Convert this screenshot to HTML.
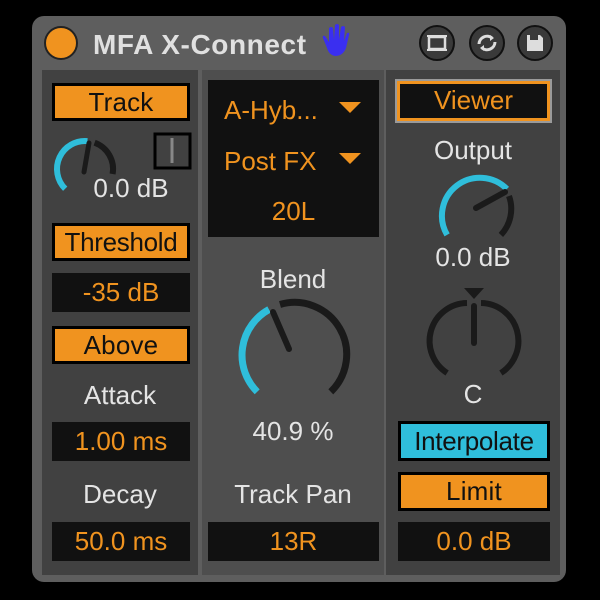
<!DOCTYPE html>
<html><head><meta charset="utf-8"><style>
*{margin:0;padding:0;box-sizing:border-box}
body{width:600px;height:600px;background:#000;position:relative;overflow:hidden;font-family:"Liberation Sans",sans-serif}
.dev{position:absolute;left:32px;top:16px;width:534px;height:566px;background:#5e5e5e;border-radius:12px}
.col{position:absolute;top:70px;height:505px}
.t{position:absolute;text-align:center;font-size:26px;line-height:1}
.btn{position:absolute;border:3px solid #000;background:#f0931f;color:#111;text-align:center;font-size:26px;letter-spacing:0.2px}
.box{position:absolute;background:#111;color:#f0931f;text-align:center;font-size:26px}
.lab{position:absolute;color:#e4e4e4;text-align:center;font-size:26px}
</style></head><body>
<div class="dev"></div>
<div class="col" style="left:42px;width:156px;background:#414141"></div>
<div class="col" style="left:202px;width:182px;background:#4e4e4e"></div>
<div class="col" style="left:386px;width:174px;background:#414141"></div>
<svg width="600" height="600" style="position:absolute;left:0;top:0">
<circle cx="61" cy="43" r="16" fill="#f0931f" stroke="#222" stroke-width="2"/>
<text x="93" y="54" font-family="Liberation Sans" font-weight="bold" font-size="28" letter-spacing="0.6" fill="#e0e0e0">MFA X-Connect</text>
<path d="M327 48 L323 38 Q322 35 325 36 L329 42 L329 28 Q331 26 333 28 L334 40 L335 25 Q337 23 339 25 L339 40 L341 27 Q343 25 345 27 L344 41 L347 33 Q350 32 349 35 L346 48 Q343 56 335 56 Q329 55 327 48Z" fill="#3a2ff0"/>
<g stroke="#111" stroke-width="2">
<circle cx="437" cy="43" r="17" fill="#3a3a3a"/><circle cx="487" cy="43" r="17" fill="#3a3a3a"/><circle cx="535" cy="43" r="17" fill="#3a3a3a"/></g>
<rect x="429" y="37" width="16" height="12" fill="none" stroke="#ddd" stroke-width="2.5"/>
<path d="M427 36h20M427 50h20" stroke="#ddd" stroke-width="2"/>
<path d="M479 44 a8 8 0 0 1 13 -6 M495 42 a8 8 0 0 1 -13 6" fill="none" stroke="#ddd" stroke-width="3"/>
<path d="M490 35 l4 3 -4 3z M484 51 l-4 -3 4 -3z" fill="#ddd"/>
<path d="M527 35 h13 l3 3 v13 h-16z" fill="#ddd"/><rect x="530" y="35" width="8" height="5" fill="#3a3a3a"/>
<path d="M65.2 188.8 A28 28 0 0 1 87.4 141.1" fill="none" stroke="#2fbedb" stroke-width="6"/>
<path d="M94.6 142.7 A28 28 0 0 1 112.6 174" fill="none" stroke="#1a1a1a" stroke-width="6"/>
<line x1="84" y1="172" x2="89" y2="143" stroke="#1a1a1a" stroke-width="5" stroke-linecap="round"/>
<rect x="155" y="134" width="35" height="34" fill="#414141" stroke="#000" stroke-width="3"/>
<line x1="172" y1="138" x2="172" y2="163" stroke="#888" stroke-width="3"/>
<path d="M257.2 391.8 A52 52 0 0 1 269 309.5" fill="none" stroke="#2fbedb" stroke-width="7"/>
<path d="M280 304.5 A52 52 0 0 1 330.8 391.8" fill="none" stroke="#1a1a1a" stroke-width="7"/>
<line x1="289" y1="349" x2="273" y2="312" stroke="#1a1a1a" stroke-width="6" stroke-linecap="round"/>
<path d="M447.1 234.9 A38 38 0 0 1 506.9 189" fill="none" stroke="#2fbedb" stroke-width="6"/>
<path d="M509 196 A38 38 0 0 1 500.9 234.9" fill="none" stroke="#1a1a1a" stroke-width="6"/>
<line x1="476" y1="208" x2="505" y2="192" stroke="#1a1a1a" stroke-width="6" stroke-linecap="round"/>
<path d="M447.1 373 A38 38 0 0 1 467 303" fill="none" stroke="#1a1a1a" stroke-width="6"/>
<path d="M481 303 A38 38 0 0 1 500.9 373" fill="none" stroke="#1a1a1a" stroke-width="6"/>
<line x1="474" y1="343" x2="474" y2="306" stroke="#1a1a1a" stroke-width="6" stroke-linecap="round"/>
<path d="M464 288 h20 l-10 11z" fill="#1a1a1a"/>
</svg>
<div class="btn" style="left:52px;top:83px;width:138px;height:38px;line-height:32px">Track</div>
<div class="lab" style="left:85px;top:174px;width:92px;height:28px;line-height:28px">0.0 dB</div>
<div class="btn" style="left:52px;top:223px;width:138px;height:38px;line-height:32px;letter-spacing:-0.3px">Threshold</div>
<div class="box" style="left:52px;top:273px;width:138px;height:39px;line-height:39px">-35 dB</div>
<div class="btn" style="left:52px;top:326px;width:138px;height:38px;line-height:32px">Above</div>
<div class="lab" style="left:42px;top:381px;width:156px;line-height:28px">Attack</div>
<div class="box" style="left:52px;top:422px;width:138px;height:39px;line-height:39px">1.00 ms</div>
<div class="lab" style="left:42px;top:480px;width:156px;line-height:28px">Decay</div>
<div class="box" style="left:52px;top:522px;width:138px;height:39px;line-height:39px">50.0 ms</div>
<div class="box" style="left:208px;top:80px;width:171px;height:157px"></div>
<div class="t" style="left:224px;top:97px;color:#f0931f">A-Hyb...</div>
<div class="t" style="left:224px;top:148px;color:#f0931f">Post FX</div>
<svg width="600" height="600" style="position:absolute;left:0;top:0"><path d="M339 102h22l-11 11z M339 153h22l-11 11z" fill="#f0931f"/></svg>
<div class="t" style="left:208px;top:198px;width:171px;color:#f0931f">20L</div>
<div class="lab" style="left:202px;top:265px;width:182px;line-height:28px">Blend</div>
<div class="lab" style="left:202px;top:417px;width:182px;line-height:28px">40.9 %</div>
<div class="lab" style="left:202px;top:480px;width:182px;line-height:28px">Track Pan</div>
<div class="box" style="left:208px;top:522px;width:171px;height:39px;line-height:39px">13R</div>
<div style="position:absolute;left:395px;top:79px;width:157px;height:44px;background:#9a9a9a;padding:2px"><div style="width:100%;height:100%;background:#111;border:3px solid #f0931f;color:#f0931f;text-align:center;font-size:26px;line-height:32px">Viewer</div></div>
<div class="lab" style="left:386px;top:136px;width:174px;line-height:28px">Output</div>
<div class="lab" style="left:386px;top:243px;width:174px;line-height:28px">0.0 dB</div>
<div class="lab" style="left:386px;top:380px;width:174px;line-height:28px">C</div>
<div class="btn" style="left:398px;top:421px;width:152px;height:40px;line-height:34px;background:#2fbedb;letter-spacing:-0.3px">Interpolate</div>
<div class="btn" style="left:398px;top:472px;width:152px;height:39px;line-height:33px">Limit</div>
<div class="box" style="left:398px;top:522px;width:152px;height:39px;line-height:39px">0.0 dB</div>
</body></html>
